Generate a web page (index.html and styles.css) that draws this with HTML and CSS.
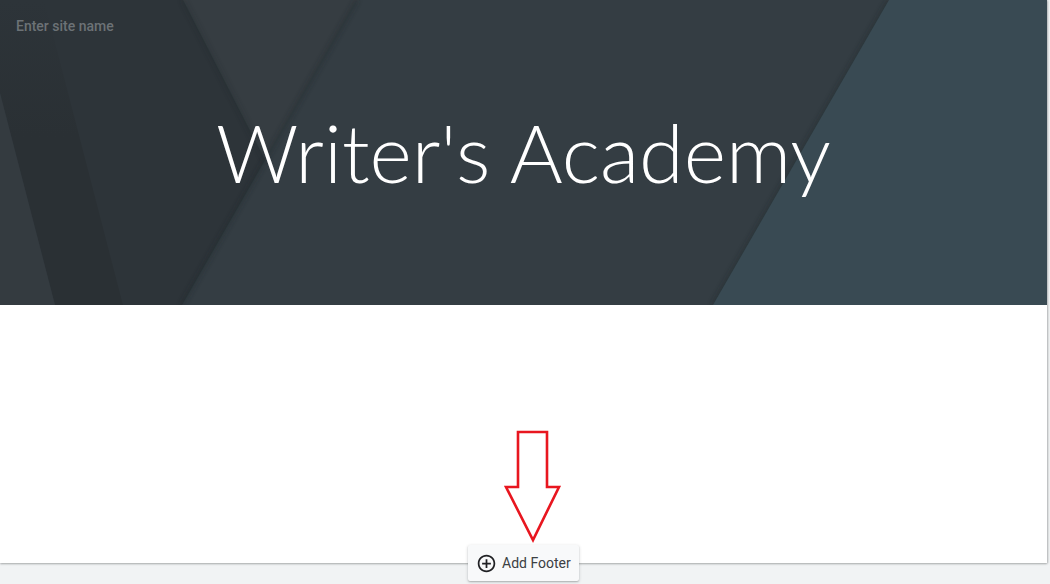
FILE: index.html
```html
<!DOCTYPE html>
<html lang="en">
<head>
<meta charset="utf-8">
<title>Writer's Academy</title>
<link rel="stylesheet" href="styles.css">
</head>
<body>
<div class="page">
  <header class="hero">
    <svg class="hero-bg" viewBox="0 0 1047 305" preserveAspectRatio="none" aria-hidden="true">
      <defs>
        <filter id="soft" x="-10%" y="-10%" width="120%" height="120%">
          <feGaussianBlur stdDeviation="2.5"/>
        </filter>
        <linearGradient id="stripe" x1="0" y1="0" x2="0" y2="1">
          <stop offset="0" stop-color="#2a3034" stop-opacity="0"/>
          <stop offset="0.45" stop-color="#2a3034" stop-opacity="1"/>
          <stop offset="1" stop-color="#2a3034" stop-opacity="1"/>
        </linearGradient>
      </defs>
      <rect x="0" y="0" width="1047" height="305" fill="#343d43"/>
      <polygon points="183,0 357,0 265,160" fill="#363d42"/>
      <polygon points="0,0 183,0 265,160 182,305 0,305" fill="#2d3439"/>
      <polygon points="-24,0 44,0 123,305 55,305" fill="url(#stripe)"/>
      <polygon points="0,93 55,305 0,305" fill="#343b40"/>
      <line x1="357" y1="0" x2="182" y2="305" stroke="#1f2427" stroke-width="3" opacity="0.45" filter="url(#soft)"/>
      <line x1="183" y1="0" x2="265" y2="160" stroke="#1f2427" stroke-width="3" opacity="0.35" filter="url(#soft)"/>
      <line x1="889" y1="0" x2="713" y2="305" stroke="#1c2225" stroke-width="3" opacity="0.5" filter="url(#soft)"/>
      <polygon points="889,0 1047,0 1047,305 713,305" fill="#394a53"/>
    </svg>
    <div class="site-name">Enter site name</div>
    <h1 class="title">Writer's Academy</h1>
  </header>
  <main class="content"></main>

  <svg class="arrow" viewBox="0 0 64 116" aria-hidden="true">
    <polygon points="18,4 47,4 47,59 59,59 33,112 6,59 18,59" fill="none" stroke="#e8161f" stroke-width="2.6" stroke-linejoin="miter"/>
  </svg>

  <button class="add-footer" type="button">
    <svg class="add-icon" viewBox="0 0 24 24" aria-hidden="true">
      <path d="M13 7h-2v4H7v2h4v4h2v-4h4v-2h-4V7zm-1-5C6.48 2 2 6.48 2 12s4.48 10 10 10 10-4.48 10-10S17.52 2 12 2zm0 18c-4.41 0-8-3.59-8-8s3.59-8 8-8 8 3.59 8 8-3.59 8-8 8z" fill="#202124"/>
    </svg>
    <span>Add Footer</span>
  </button>
</div>
</body>
</html>
```

FILE: styles.css
```css
html, body {
  margin: 0;
  padding: 0;
}
body {
  background: #f1f3f4;
  width: 1050px;
  height: 584px;
  overflow: hidden;
  font-family: Roboto, "Liberation Sans", Arial, sans-serif;
}
.page {
  position: relative;
  width: 1047px;
  height: 563px;
  background: #ffffff;
  box-shadow: 0 1px 2px rgba(60, 64, 67, 0.35), 1px 0 2px rgba(60, 64, 67, 0.25);
  display: flex;
  flex-direction: column;
}
.hero {
  position: relative;
  height: 305px;
  flex: 0 0 305px;
  overflow: hidden;
  display: flex;
  flex-direction: column;
}
.hero-bg {
  position: absolute;
  left: 0;
  top: 0;
  width: 100%;
  height: 100%;
  display: block;
}
.site-name {
  position: relative;
  padding: 18px 0 0 16px;
  font-size: 14px;
  font-weight: 500;
  line-height: 16px;
  color: #6c7276;
}
.title {
  position: relative;
  margin: 0;
  padding-top: 70px;
  text-align: center;
  font-family: Lato, "Open Sans", sans-serif;
  font-weight: 300;
  font-size: 81px;
  line-height: 96px;
  color: #ffffff;
  letter-spacing: 0;
}
.content {
  flex: 1;
}
.arrow {
  position: absolute;
  left: 500px;
  top: 428px;
  width: 64px;
  height: 116px;
}
.add-footer {
  position: absolute;
  left: 468px;
  top: 545px;
  height: 36px;
  padding: 0 8px 0 8px;
  border: none;
  border-radius: 2px;
  background: #f8f9fa;
  box-shadow: 0 1px 3px rgba(60, 64, 67, 0.3), 0 1px 1px rgba(60, 64, 67, 0.15);
  display: flex;
  align-items: center;
  gap: 5px;
  font-family: Roboto, "Liberation Sans", Arial, sans-serif;
  font-size: 14px;
  color: #3c4043;
  cursor: pointer;
}
.add-icon {
  width: 21px;
  height: 21px;
  display: block;
}
```
